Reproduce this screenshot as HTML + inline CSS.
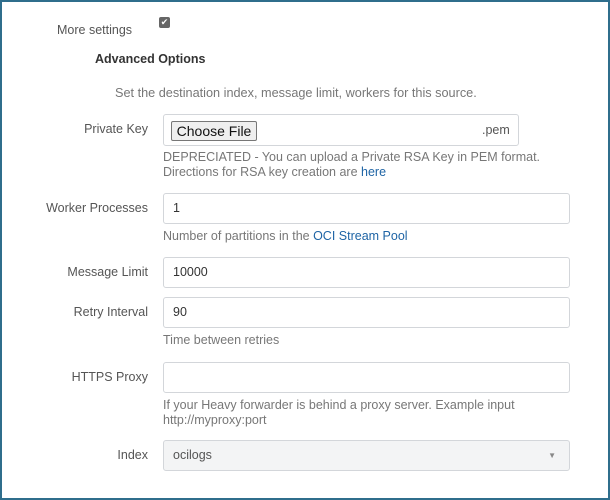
<!DOCTYPE html>
<html><head><style>
*{margin:0;padding:0;box-sizing:border-box}
body{width:610px;height:500px;background:#fff;font-family:"Liberation Sans",sans-serif;font-size:12.5px;color:#555;position:relative;overflow:hidden}
.frame{position:absolute;left:0;top:0;width:610px;height:500px;border:2px solid #2f6e8c;border-top-width:2px}
.a{position:absolute;white-space:nowrap}
.lbl{position:absolute;right:462px;text-align:right;color:#555;white-space:nowrap}
.in{position:absolute;left:163px;width:407px;height:31px;border:1px solid #d3d6da;border-radius:3px;background:#fff;padding-left:9px;line-height:29px;color:#333}
.help{position:absolute;left:163px;color:#777;line-height:15px}
a{color:#1e64a5;text-decoration:none}
</style></head><body>
<div class="frame"></div>
<div class="a" style="left:57px;top:23px;color:#555">More settings</div>
<div class="a" style="left:159px;top:17px;width:11px;height:11px;background:#666;border-radius:2px;color:#fff;font-size:9px;line-height:11px;text-align:center">✔</div>
<div class="a" style="left:95px;top:52px;font-weight:bold;color:#333">Advanced Options</div>
<div class="a" style="left:115px;top:86px;color:#777;font-size:12.7px">Set the destination index, message limit, workers for this source.</div>

<div class="lbl" style="top:122px">Private Key</div>
<div class="in" style="top:114px;width:356px;height:32px"></div>
<div class="a" style="left:171px;top:121px;width:86px;height:20px;border:1px solid #777;background:#efefef;border-radius:2px;color:#111;font-size:14px;line-height:18px;text-align:center">Choose File</div>
<div class="a" style="left:482px;top:123px;color:#555">.pem</div>
<div class="help" style="top:150px">DEPRECIATED - You can upload a Private RSA Key in PEM format.<br>Directions for RSA key creation are <a>here</a></div>

<div class="lbl" style="top:201px">Worker Processes</div>
<div class="in" style="top:193px">1</div>
<div class="help" style="top:229px">Number of partitions in the <a>OCI Stream Pool</a></div>

<div class="lbl" style="top:265px">Message Limit</div>
<div class="in" style="top:257px">10000</div>

<div class="lbl" style="top:305px">Retry Interval</div>
<div class="in" style="top:297px">90</div>
<div class="help" style="top:333px">Time between retries</div>

<div class="lbl" style="top:370px">HTTPS Proxy</div>
<div class="in" style="top:362px"></div>
<div class="help" style="top:398px">If your Heavy forwarder is behind a proxy server. Example input<br>http://myproxy:port</div>

<div class="lbl" style="top:448px">Index</div>
<div class="in" style="top:440px;background:#f3f4f5;color:#555">ocilogs<span style="position:absolute;right:13px;top:0;font-size:8px;color:#888">▼</span></div>
</body></html>
